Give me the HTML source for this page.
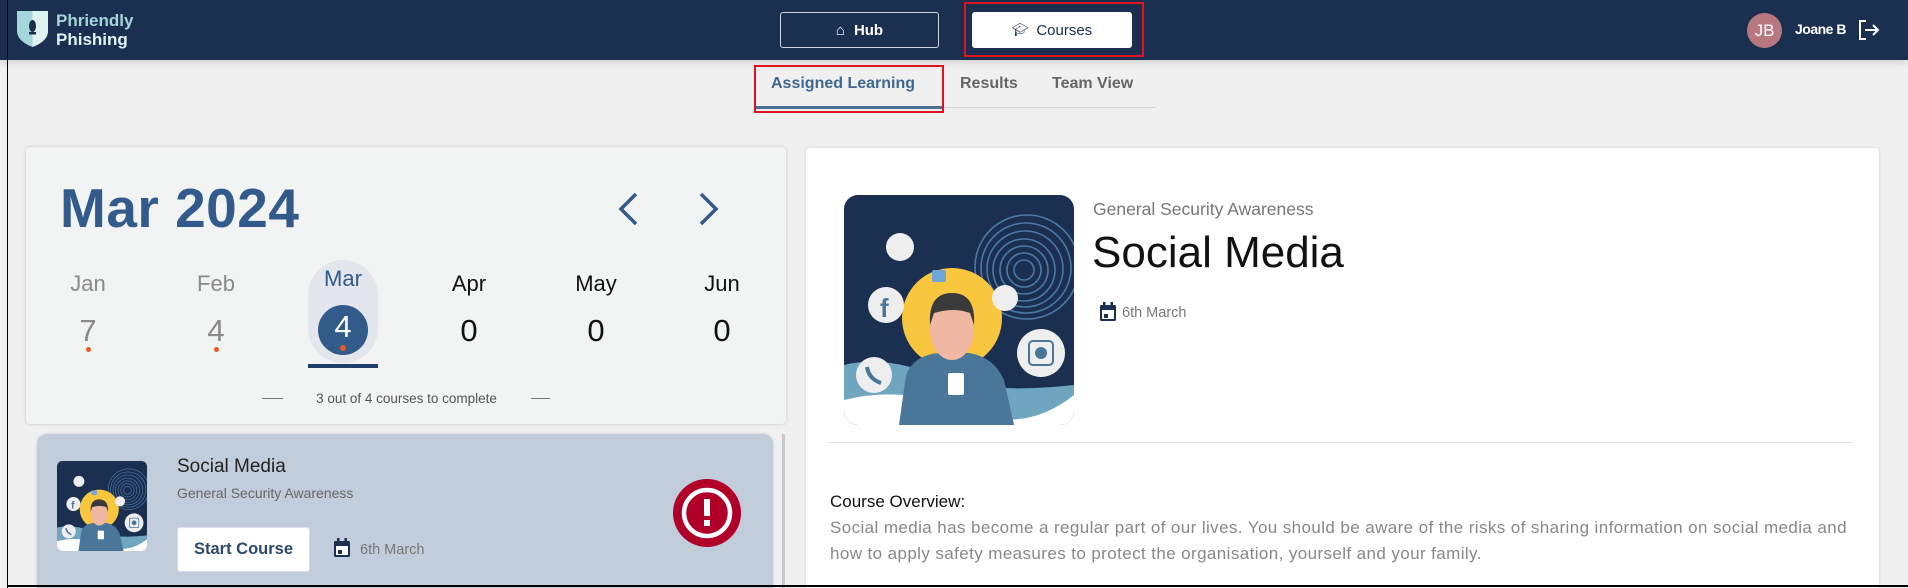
<!DOCTYPE html>
<html style="width:1908px;height:588px;overflow:hidden"><head><meta charset="utf-8">
<style>
*{margin:0;padding:0;box-sizing:border-box}
body{width:1908px;height:588px;overflow:hidden;background:#f0f0f0;font-family:"Liberation Sans",sans-serif;position:relative}
.abs{position:absolute}
.nav{left:0;top:0;width:1908px;height:60px;background:#1b2f50;box-shadow:0 2px 8px rgba(0,0,0,.15)}
.btn{border-radius:3px;display:flex;align-items:center;justify-content:center;font-size:15px;font-weight:bold}
.t{white-space:nowrap}
</style></head><body>
<svg width="0" height="0" style="position:absolute">
<defs>
<clipPath id="cp"><rect x="0" y="0" width="230" height="230" rx="14"/></clipPath>
<symbol id="ill" viewBox="0 0 230 230">
<g clip-path="url(#cp)">
<rect width="230" height="230" fill="#1b2f50"/>
<g fill="none" stroke="#4a7aa5" stroke-width="1.6">
<circle cx="180" cy="75" r="10"/><circle cx="180" cy="75" r="17"/><circle cx="180" cy="75" r="24"/><circle cx="180" cy="75" r="31"/><circle cx="181" cy="74" r="38"/><circle cx="182" cy="73" r="45"/><circle cx="183" cy="72" r="52"/>
</g>
<circle cx="56" cy="52" r="14" fill="#eeeeee"/>
<circle cx="108" cy="123" r="50" fill="#f8c73e"/>
<path d="M0 170 Q40 160 90 180 T230 190 L230 230 L0 230Z" fill="#6fa5bf"/>
<path d="M0 205 Q60 190 120 215 T230 200 L230 230 L0 230Z" fill="#ffffff"/>
<path d="M55 230 L62 180 Q70 160 95 158 L125 158 Q150 162 160 185 L170 230Z" fill="#4a769a"/>
<ellipse cx="108" cy="135" rx="22" ry="30" fill="#f0b8a3"/>
<path d="M86 130 Q84 98 108 98 Q132 98 130 130 L126 118 Q110 112 90 118Z" fill="#3a3a3a"/>
<rect x="104" y="178" width="16" height="22" rx="2" fill="#fff"/>
<circle cx="42" cy="110" r="18" fill="#eeeeee"/>
<text x="36" y="122" font-size="26" font-weight="bold" fill="#4a769a" font-family="Liberation Sans">f</text>
<circle cx="161" cy="103" r="13" fill="#eeeeee"/>
<circle cx="197" cy="158" r="24" fill="#eeeeee"/>
<rect x="185" y="146" width="24" height="24" rx="4" fill="none" stroke="#4a769a" stroke-width="2"/>
<circle cx="197" cy="158" r="6" fill="#4a769a"/>
<circle cx="30" cy="180" r="18" fill="#eeeeee"/>
<path d="M23 172 q2 12 14 16" stroke="#4a769a" stroke-width="4" fill="none"/>
<rect x="88" y="75" width="14" height="12" rx="2" fill="#6fa5d8"/>
</g>
</symbol>
<symbol id="cal" viewBox="0 0 18 20"><rect x="1" y="3" width="16" height="16" rx="1.5" fill="#1b2f50"/><rect x="3" y="8" width="12" height="9" fill="#fff"/><rect x="4" y="0" width="2.5" height="5" fill="#1b2f50"/><rect x="11.5" y="0" width="2.5" height="5" fill="#1b2f50"/><rect x="5" y="12" width="4" height="4" fill="#1b2f50"/></symbol>
</defs></svg>

<div class="abs nav"></div>
<svg class="abs" style="left:17px;top:11px" width="31" height="36" viewBox="0 0 31 36"><path d="M0 0 H31 V20 Q31 30 15.5 36 Q0 30 0 20Z" fill="#a5d6da"/><path d="M15.5 0 H31 V20 Q31 30 15.5 36Z" fill="#dff3f1"/><ellipse cx="15.5" cy="15" rx="3.5" ry="6" fill="#1b2f50"/><rect x="12" y="21" width="7" height="2.5" fill="#1b2f50"/></svg>
<div class="abs t" style="left:56px;top:11px;font-size:17px;font-weight:bold;color:#a5d6da;line-height:19px">Phriendly</div>
<div class="abs t" style="left:56px;top:30px;font-size:17px;font-weight:bold;color:#e0f4f2;line-height:19px">Phishing</div>

<div class="abs btn" style="left:780px;top:12px;width:159px;height:36px;border:1px solid #d0d6df;color:#fff"><span style="font-size:15px;margin-right:9px">⌂</span>Hub</div>
<div class="abs" style="left:964px;top:2px;width:180px;height:55px;border:2px solid #e0141e"></div>
<div class="abs btn" style="left:972px;top:12px;width:160px;height:36px;background:#fff;color:#1b2f50;font-weight:normal"><span style="font-size:13px;margin-right:8px">🎓︎</span>Courses</div>

<div class="abs" style="left:1747px;top:13px;width:35px;height:35px;border-radius:50%;background:#b87880;color:#fff;font-size:17px;display:flex;align-items:center;justify-content:center">JB</div>
<div class="abs t" style="left:1795px;top:21px;font-size:14px;font-weight:bold;color:#fff;letter-spacing:-0.5px">Joane B</div>
<svg class="abs" style="left:1858px;top:19px" width="22" height="22" viewBox="0 0 22 22" fill="none" stroke="#fff" stroke-width="2"><path d="M8 2H2V20H8"/><path d="M7 11H20M15 6l5 5-5 5"/></svg>

<div class="abs" style="left:759px;top:107px;width:397px;height:1px;background:#cfcfcf"></div>
<div class="abs" style="left:756px;top:106px;width:187px;height:3px;background:#4a7096"></div>
<div class="abs" style="left:754px;top:65px;width:190px;height:48px;border:2px solid #e0141e"></div>
<div class="abs t" style="left:771px;top:75px;font-size:16px;font-weight:bold;color:#3f6890">Assigned Learning</div>
<div class="abs t" style="left:960px;top:75px;font-size:16px;font-weight:bold;color:#666">Results</div>
<div class="abs t" style="left:1052px;top:75px;font-size:16px;font-weight:bold;color:#666">Team View</div>

<div class="abs" style="left:26px;top:147px;width:760px;height:277px;background:#f2f3f3;border-radius:4px;box-shadow:0 0 3px rgba(0,0,0,.2)"></div>
<div class="abs t" style="left:60px;top:176px;font-size:55px;font-weight:bold;color:#325a8a;letter-spacing:0.5px">Mar 2024</div>
<svg class="abs" style="left:616px;top:192px" width="24" height="34" viewBox="0 0 24 34" fill="none" stroke="#325a8a" stroke-width="3.5"><path d="M20 2L5 17l15 15"/></svg>
<svg class="abs" style="left:697px;top:192px" width="24" height="34" viewBox="0 0 24 34" fill="none" stroke="#325a8a" stroke-width="3.5"><path d="M4 2l15 15L4 32"/></svg>
<div class="abs" style="left:308px;top:260px;width:70px;height:103px;border-radius:35px;background:#e3e6ec"></div>
<div class="abs" style="left:318px;top:305px;width:50px;height:50px;border-radius:50%;background:#325a8a"></div>
<div class="abs" style="left:308px;top:364px;width:70px;height:4px;background:#1e3d6b"></div>
<div class="abs" style="left:0;top:271px;width:790px;font-size:22px">
<span class="abs t" style="left:58px;width:60px;text-align:center;color:#8a8a8a">Jan</span>
<span class="abs t" style="left:186px;width:60px;text-align:center;color:#8a8a8a">Feb</span>
<span class="abs t" style="left:313px;width:60px;text-align:center;color:#325a8a;top:-5px">Mar</span>
<span class="abs t" style="left:439px;width:60px;text-align:center;color:#111">Apr</span>
<span class="abs t" style="left:566px;width:60px;text-align:center;color:#111">May</span>
<span class="abs t" style="left:692px;width:60px;text-align:center;color:#111">Jun</span>
</div>
<div class="abs" style="left:0;top:313px;width:790px;font-size:31px">
<span class="abs t" style="left:58px;width:60px;text-align:center;color:#8a8a8a">7</span>
<span class="abs t" style="left:186px;width:60px;text-align:center;color:#8a8a8a">4</span>
<span class="abs t" style="left:313px;width:60px;text-align:center;color:#fff;top:-4px">4</span>
<span class="abs t" style="left:439px;width:60px;text-align:center;color:#111">0</span>
<span class="abs t" style="left:566px;width:60px;text-align:center;color:#111">0</span>
<span class="abs t" style="left:692px;width:60px;text-align:center;color:#111">0</span>
</div>
<div class="abs" style="left:86px;top:347px;width:5px;height:5px;border-radius:50%;background:#e85a2a"></div>
<div class="abs" style="left:214px;top:347px;width:5px;height:5px;border-radius:50%;background:#e85a2a"></div>
<div class="abs" style="left:340px;top:345px;width:6px;height:6px;border-radius:50%;background:#e85a2a"></div>
<div class="abs" style="left:262px;top:398px;width:21px;height:1px;background:#777"></div>
<div class="abs" style="left:531px;top:398px;width:19px;height:1px;background:#777"></div>
<div class="abs t" style="left:290px;top:391px;width:233px;text-align:center;font-size:13.5px;color:#555">3 out of 4 courses to complete</div>

<div class="abs" style="left:37px;top:434px;width:736px;height:154px;background:#c2cddb;border-radius:10px 10px 0 0;box-shadow:0 0 3px rgba(0,0,0,.15)"></div>
<div class="abs" style="left:782px;top:434px;width:3px;height:154px;background:#c8c8c8"></div>
<svg class="abs" style="left:57px;top:461px" width="90" height="90"><use href="#ill"/></svg>
<div class="abs t" style="left:177px;top:456px;font-size:19px;color:#222">Social Media</div>
<div class="abs t" style="left:177px;top:485px;font-size:14px;color:#666">General Security Awareness</div>
<div class="abs btn" style="left:177px;top:527px;width:133px;height:45px;background:#fff;color:#2d4a6b;font-size:16.5px;border:1px solid #dde">Start Course</div>
<svg class="abs" style="left:333px;top:538px" width="18" height="20"><use href="#cal"/></svg>
<div class="abs t" style="left:360px;top:542px;font-size:14.5px;color:#777">6th March</div>
<svg class="abs" style="left:673px;top:479px" width="68" height="68" viewBox="0 0 68 68"><circle cx="34" cy="34" r="34" fill="#b0002a"/><circle cx="34" cy="34" r="23" fill="none" stroke="#fff" stroke-width="4.5"/><rect x="31" y="20" width="6" height="17" fill="#fff"/><rect x="31" y="41" width="6" height="6" fill="#fff"/></svg>

<div class="abs" style="left:806px;top:148px;width:1073px;height:440px;background:#fff;border-radius:4px 4px 0 0;box-shadow:0 0 3px rgba(0,0,0,.12)"></div>
<svg class="abs" style="left:844px;top:195px" width="230" height="230"><use href="#ill"/></svg>
<div class="abs t" style="left:1093px;top:199px;font-size:17.5px;color:#777">General Security Awareness</div>
<div class="abs t" style="left:1092px;top:228px;font-size:44px;color:#111">Social Media</div>
<svg class="abs" style="left:1099px;top:302px" width="18" height="20"><use href="#cal"/></svg>
<div class="abs t" style="left:1122px;top:305px;font-size:14.5px;color:#777">6th March</div>
<div class="abs" style="left:828px;top:442px;width:1025px;height:1px;background:#e3e3e3"></div>
<div class="abs t" style="left:830px;top:492px;font-size:17px;color:#111">Course Overview:</div>
<div class="abs t" style="left:830px;top:515px;font-size:17px;letter-spacing:0.4px;line-height:26px;color:#888">Social media has become a regular part of our lives. You should be aware of the risks of sharing information on social media and<br>how to apply safety measures to protect the organisation, yourself and your family.</div>

<div class="abs" style="left:7px;top:0;width:1px;height:588px;background:#000"></div>
<div class="abs" style="left:7px;top:585px;width:1901px;height:2px;background:#000"></div>
</body></html>
